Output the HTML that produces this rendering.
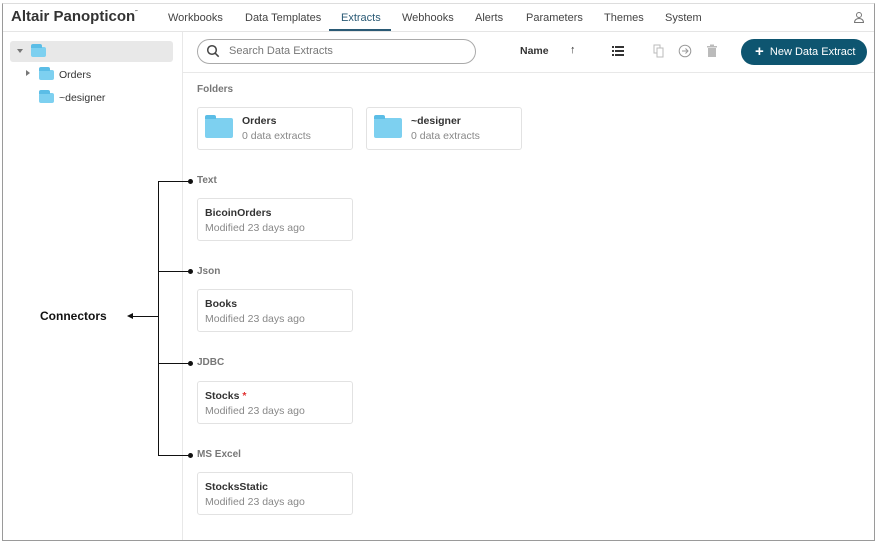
<!DOCTYPE html>
<html><head><style>
*{box-sizing:border-box;margin:0;padding:0}
body{width:878px;height:546px;background:#fff;font-family:"Liberation Sans",sans-serif;position:relative;overflow:hidden;color:#333}
.frame{position:absolute;left:2px;top:3px;width:873px;height:538px;border:1px solid #9a9a9a;border-top-color:#ddd}
.a{position:absolute}
.nav{font-size:11px;color:#444;top:12px}
.card{position:absolute;border:1px solid #e2e2e2;border-radius:3px;background:#fff;width:156px;height:43px}
.card b{position:absolute;left:7px;top:8px;font-size:10.5px;color:#333}
.card span{position:absolute;left:7px;top:23px;font-size:10.5px;color:#888}
.lbl{position:absolute;left:197px;font-size:10px;font-weight:bold;color:#777}
.fold{position:absolute;width:28px;height:20px;background:#7dd0f0;border-radius:2px}
.fold:before{content:"";position:absolute;left:0;top:-3px;width:11px;height:4px;background:#5bbde6;border-radius:2px 2px 0 0}
.line{position:absolute;background:#111}
.dot{position:absolute;width:5px;height:5px;border-radius:50%;background:#111}
</style></head><body>
<div class="frame"></div>
<div class="a" style="left:3px;top:31px;width:871px;height:1px;background:#e5e5e5"></div>
<div class="a" style="left:11px;top:8px;font-size:15px;font-weight:bold;color:#333">Altair Panopticon<sup style="font-size:6px">˜</sup></div>
<div class="a nav" style="left:168px">Workbooks</div>
<div class="a nav" style="left:245px">Data Templates</div>
<div class="a nav" style="left:341px;color:#2a5a75">Extracts</div>
<div class="a" style="left:329px;top:29px;width:62px;height:2px;background:#2a5a75"></div>
<div class="a nav" style="left:402px">Webhooks</div>
<div class="a nav" style="left:475px">Alerts</div>
<div class="a nav" style="left:526px">Parameters</div>
<div class="a nav" style="left:604px">Themes</div>
<div class="a nav" style="left:665px">System</div>
<svg class="a" style="left:853px;top:11px" width="12" height="12" viewBox="0 0 12 12" fill="none" stroke="#777" stroke-width="1"><circle cx="6" cy="4" r="2.5"/><path d="M1.5 11.5c0-2.5 2-4 4.5-4s4.5 1.5 4.5 4z"/></svg>
<div class="a" style="left:182px;top:32px;width:1px;height:508px;background:#e8e8e8"></div>
<div class="a" style="left:183px;top:72px;width:691px;height:1px;background:#e8e8e8"></div>
<div class="a" style="left:10px;top:41px;width:163px;height:21px;background:#e8e8e8;border-radius:3px"></div>
<div class="a" style="left:17px;top:49px;border-left:3px solid transparent;border-right:3px solid transparent;border-top:4px solid #777"></div>
<div class="fold" style="left:31px;top:47px;width:15px;height:10px"></div>
<div class="a" style="left:26px;top:70px;border-top:3px solid transparent;border-bottom:3px solid transparent;border-left:4px solid #777"></div>
<div class="fold" style="left:39px;top:70px;width:15px;height:10px"></div>
<div class="a" style="left:59px;top:69px;font-size:10.5px">Orders</div>
<div class="fold" style="left:39px;top:93px;width:15px;height:10px"></div>
<div class="a" style="left:59px;top:92px;font-size:10.5px">~designer</div>
<div class="a" style="left:197px;top:39px;width:279px;height:25px;border:1px solid #aaa;border-radius:13px"></div>
<svg class="a" style="left:206px;top:44px" width="14" height="14" viewBox="0 0 14 14" fill="none" stroke="#444" stroke-width="1.5"><circle cx="6" cy="6" r="4.3"/><path d="M9.2 9.2l3.5 3.5"/></svg>
<div class="a" style="left:229px;top:45px;font-size:11px;color:#777">Search Data Extracts</div>
<div class="a" style="left:520px;top:45px;font-size:10.5px;font-weight:bold">Name</div>
<div class="a" style="left:570px;top:44px;font-size:11px;color:#333">↑</div>
<svg class="a" style="left:612px;top:46px" width="12" height="10" viewBox="0 0 12 10" fill="#333"><rect x="0" y="0" width="2" height="2"/><rect x="3" y="0" width="9" height="2"/><rect x="0" y="4" width="2" height="2"/><rect x="3" y="4" width="9" height="2"/><rect x="0" y="8" width="2" height="2"/><rect x="3" y="8" width="9" height="2"/></svg>
<svg class="a" style="left:653px;top:44px" width="12" height="14" viewBox="0 0 12 14" fill="none" stroke="#bbb"><rect x="1" y="1" width="6" height="8"/><rect x="4" y="4" width="6" height="9" fill="#fff"/></svg>
<svg class="a" style="left:678px;top:44px" width="14" height="14" viewBox="0 0 14 14" fill="none" stroke="#999"><circle cx="7" cy="7" r="5.8"/><path d="M4 7h6M7.5 4.5L10 7 7.5 9.5"/></svg>
<svg class="a" style="left:706px;top:44px" width="12" height="14" viewBox="0 0 12 14" fill="#bbb"><rect x="1" y="2" width="10" height="1.5"/><rect x="4" y="0.5" width="4" height="1.5"/><rect x="2" y="4" width="8" height="9"/></svg>
<div class="a" style="left:741px;top:39px;width:126px;height:26px;background:#0e5570;border-radius:13px;color:#fff;font-size:11px;line-height:26px;padding-left:14px"><span style="font-size:15px;font-weight:bold;vertical-align:-1px">+</span>&nbsp; New Data Extract</div>
<div class="lbl" style="top:84px">Folders</div>
<div class="card" style="left:197px;top:107px"></div>
<div class="fold" style="left:205px;top:118px"></div>
<div class="a" style="left:242px;top:115px;font-size:10.5px;font-weight:bold">Orders</div>
<div class="a" style="left:242px;top:130px;font-size:10.5px;color:#888">0 data extracts</div>
<div class="card" style="left:366px;top:107px"></div>
<div class="fold" style="left:374px;top:118px"></div>
<div class="a" style="left:411px;top:115px;font-size:10.5px;font-weight:bold">~designer</div>
<div class="a" style="left:411px;top:130px;font-size:10.5px;color:#888">0 data extracts</div>
<div class="lbl" style="top:175px">Text</div>
<div class="card" style="left:197px;top:198px"><b>BicoinOrders</b><span>Modified 23 days ago</span></div>
<div class="lbl" style="top:266px">Json</div>
<div class="card" style="left:197px;top:289px"><b>Books</b><span>Modified 23 days ago</span></div>
<div class="lbl" style="top:357px">JDBC</div>
<div class="card" style="left:197px;top:381px"><b>Stocks <span style="position:static;color:#e03030">*</span></b><span>Modified 23 days ago</span></div>
<div class="lbl" style="top:449px">MS Excel</div>
<div class="card" style="left:197px;top:472px"><b>StocksStatic</b><span>Modified 23 days ago</span></div>
<div class="line" style="left:158px;top:181px;width:1px;height:274px"></div>
<div class="line" style="left:158px;top:181px;width:32px;height:1px"></div>
<div class="line" style="left:158px;top:271px;width:32px;height:1px"></div>
<div class="line" style="left:158px;top:363px;width:32px;height:1px"></div>
<div class="line" style="left:158px;top:455px;width:32px;height:1px"></div>
<div class="dot" style="left:188px;top:179px"></div>
<div class="dot" style="left:188px;top:269px"></div>
<div class="dot" style="left:188px;top:361px"></div>
<div class="dot" style="left:188px;top:453px"></div>
<div class="line" style="left:130px;top:316px;width:28px;height:1px"></div>
<div class="a" style="left:127px;top:313px;border-top:3.5px solid transparent;border-bottom:3.5px solid transparent;border-right:6px solid #111"></div>
<div class="a" style="left:40px;top:309px;font-size:12px;font-weight:bold;color:#111">Connectors</div>
</body></html>
